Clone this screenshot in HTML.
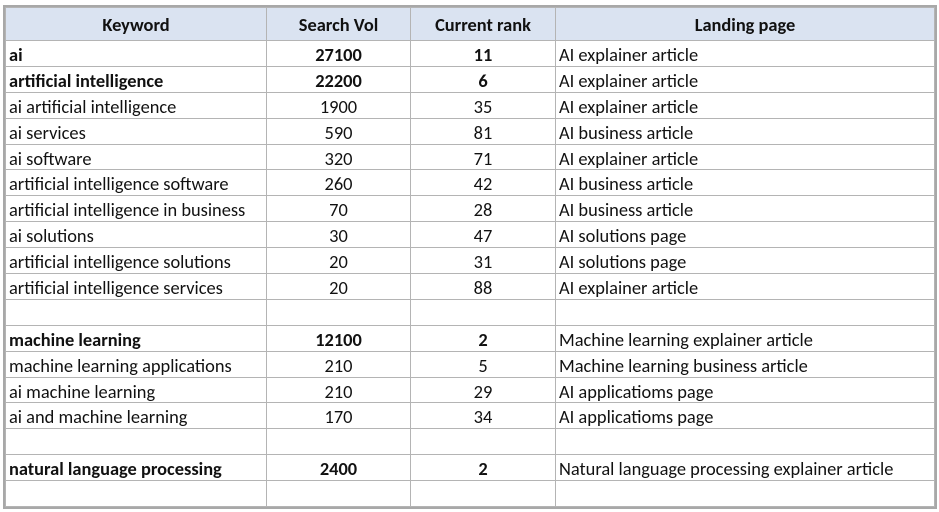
<!DOCTYPE html>
<html><head><meta charset="utf-8"><style>
body{margin:0;background:#fff;width:939px;height:512px;overflow:hidden;font-family:"Carlito","Liberation Sans",sans-serif;color:#111;}
table{position:absolute;left:5px;top:7px;border-collapse:collapse;table-layout:fixed;width:929px;font-size:18.4px;}
td,th{border:1px solid #b4b4b4;padding:0 3px;line-height:20px;white-space:nowrap;overflow:hidden;}
td{padding-top:3px;height:21.9px;}
th{background:#dae3f1;height:32px;padding-top:2px;height:30px;font-weight:bold;text-align:center;}
td.c{text-align:center}
tr.b td{font-weight:bold}
table{outline:2px solid #a8a8a8;}
</style></head><body>
<table>
<colgroup><col style="width:261px"><col style="width:144px"><col style="width:145px"><col style="width:379px"></colgroup>
<tr><th>Keyword</th><th>Search Vol</th><th>Current rank</th><th>Landing page</th></tr>
<tr class="b"><td>ai</td><td class="c">27100</td><td class="c">11</td><td style="font-weight:normal">AI explainer article</td></tr>
<tr class="b"><td>artificial intelligence</td><td class="c">22200</td><td class="c">6</td><td style="font-weight:normal">AI explainer article</td></tr>
<tr><td>ai artificial intelligence</td><td class="c">1900</td><td class="c">35</td><td>AI explainer article</td></tr>
<tr><td>ai services</td><td class="c">590</td><td class="c">81</td><td>AI business article</td></tr>
<tr><td>ai software</td><td class="c">320</td><td class="c">71</td><td>AI explainer article</td></tr>
<tr><td>artificial intelligence software</td><td class="c">260</td><td class="c">42</td><td>AI business article</td></tr>
<tr><td>artificial intelligence in business</td><td class="c">70</td><td class="c">28</td><td>AI business article</td></tr>
<tr><td>ai solutions</td><td class="c">30</td><td class="c">47</td><td>AI solutions page</td></tr>
<tr><td>artificial intelligence solutions</td><td class="c">20</td><td class="c">31</td><td>AI solutions page</td></tr>
<tr><td>artificial intelligence services</td><td class="c">20</td><td class="c">88</td><td>AI explainer article</td></tr>
<tr><td></td><td></td><td></td><td></td></tr>
<tr class="b"><td>machine learning</td><td class="c">12100</td><td class="c">2</td><td style="font-weight:normal">Machine learning explainer article</td></tr>
<tr><td>machine learning applications</td><td class="c">210</td><td class="c">5</td><td>Machine learning business article</td></tr>
<tr><td>ai machine learning</td><td class="c">210</td><td class="c">29</td><td>AI applicatioms page</td></tr>
<tr><td>ai and machine learning</td><td class="c">170</td><td class="c">34</td><td>AI applicatioms page</td></tr>
<tr><td></td><td></td><td></td><td></td></tr>
<tr class="b"><td>natural language processing</td><td class="c">2400</td><td class="c">2</td><td style="font-weight:normal">Natural language processing explainer article</td></tr>
<tr><td></td><td></td><td></td><td></td></tr>
</table>
</body></html>
